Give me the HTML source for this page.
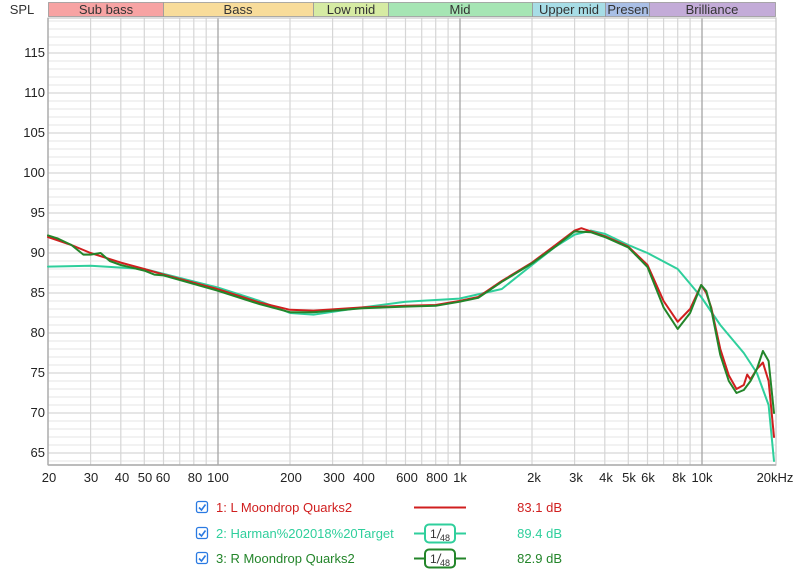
<!DOCTYPE html>
<html><head><meta charset="utf-8"><style>
html,body{margin:0;padding:0;background:#fff;width:800px;height:574px;overflow:hidden}
text{font-family:"Liberation Sans",Arial,sans-serif}
</style></head><body>
<svg width="800" height="574" viewBox="0 0 800 574" xmlns="http://www.w3.org/2000/svg">
<!-- bands -->
<g font-size="13" fill="#333" text-anchor="middle" stroke="#999" stroke-width="0.8">
<rect x="48.5" y="2.5" width="115" height="14" fill="#f7a3a3"/>
<rect x="163.5" y="2.5" width="150" height="14" fill="#f8dc9a"/>
<rect x="313.5" y="2.5" width="75" height="14" fill="#d6eba3"/>
<rect x="388.5" y="2.5" width="144" height="14" fill="#a6e5b4"/>
<rect x="532.5" y="2.5" width="73" height="14" fill="#a7dde6"/>
<rect x="605.5" y="2.5" width="44" height="14" fill="#a9bfe6"/>
<rect x="649.5" y="2.5" width="126" height="14" fill="#c3abd8"/>
</g>
<g font-size="13" fill="#333" text-anchor="middle">
<text x="106" y="14">Sub bass</text><text x="238" y="14">Bass</text><text x="351" y="14">Low mid</text>
<text x="460" y="14">Mid</text><text x="569" y="14">Upper mid</text><text x="628" y="14">Presen</text><text x="712" y="14">Brilliance</text>
<text x="22" y="14" text-anchor="middle">SPL</text>
</g>
<!-- grid -->
<g stroke="#e6e6e6" stroke-width="1">
<path d="M48 21H776M48 29H776M48 37H776M48 45H776M48 61H776M48 69H776M48 77H776M48 85H776M48 101H776M48 109H776M48 117H776M48 125H776M48 141H776M48 149H776M48 157H776M48 165H776M48 181H776M48 189H776M48 197H776M48 205H776M48 221H776M48 229H776M48 237H776M48 245H776M48 261H776M48 269H776M48 277H776M48 285H776M48 301H776M48 309H776M48 317H776M48 325H776M48 341H776M48 349H776M48 357H776M48 365H776M48 381H776M48 389H776M48 397H776M48 405H776M48 421H776M48 429H776M48 437H776M48 445H776M48 461H776"/>
</g>
<g stroke="#d6d6d6" stroke-width="1.2">
<path d="M48 53H776M48 93H776M48 133H776M48 173H776M48 213H776M48 253H776M48 293H776M48 333H776M48 373H776M48 413H776M48 453H776"/>
<path d="M90.6 18V465M120.8 18V465M144.3 18V465M163.5 18V465M179.7 18V465M193.8 18V465M206.2 18V465M290 18V465M332.6 18V465M362.8 18V465M386.3 18V465M405.5 18V465M421.7 18V465M435.7 18V465M448.1 18V465M532 18V465M574.6 18V465M604.8 18V465M628.3 18V465M647.5 18V465M663.6 18V465M677.7 18V465M690.1 18V465"/>
</g>
<g stroke="#aaa" stroke-width="1.4"><path d="M218 18V465M460 18V465M702 18V465"/></g>
<rect x="48" y="18" width="728" height="447" fill="none" stroke="#c8c8c8" stroke-width="1.2"/>
<path d="M48 465H776M48 18V465" stroke="#aaa" stroke-width="1.4" fill="none"/>
<!-- y labels -->
<g font-size="13" fill="#222" text-anchor="end">
<text x="45" y="57">115</text><text x="45" y="97">110</text><text x="45" y="137">105</text><text x="45" y="177">100</text>
<text x="45" y="217">95</text><text x="45" y="257">90</text><text x="45" y="297">85</text><text x="45" y="337">80</text>
<text x="45" y="377">75</text><text x="45" y="417">70</text><text x="45" y="457">65</text>
</g>
<g font-size="13" fill="#222" text-anchor="middle">
<text x="49" y="482">20</text><text x="91" y="482">30</text><text x="122" y="482">40</text><text x="145" y="482">50</text><text x="163" y="482">60</text>
<text x="195" y="482">80</text><text x="218" y="482">100</text><text x="291" y="482">200</text><text x="334" y="482">300</text><text x="364" y="482">400</text>
<text x="407" y="482">600</text><text x="437" y="482">800</text><text x="460" y="482">1k</text><text x="534" y="482">2k</text><text x="576" y="482">3k</text>
<text x="606" y="482">4k</text><text x="629" y="482">5k</text><text x="648" y="482">6k</text><text x="679" y="482">8k</text><text x="702" y="482">10k</text><text x="775" y="482">20kHz</text>
</g>
<!-- curves -->
<g fill="none" stroke-width="2" stroke-linejoin="round" stroke-linecap="round">
<polyline stroke="#2fcf9c" points="48,266.6 90.6,265.8 144.3,269 218,287.6 259.8,301 290,313 313.5,314.6 362.8,307.4 405.5,301.8 459.2,298.6 501.8,289 532,265 555.5,246.6 574.6,234.6 590.8,230.6 604.8,233.8 628.3,245 647.5,253 677.7,269 701.2,297 720.3,325 743.8,353 756.9,373 768.6,405 774,461"/>
<polyline stroke="#d01f1f" points="48,237 71.4,245 90.6,253 120.8,262.6 144.3,269 163.5,274.6 217.2,289 259.8,302.6 290,309.8 313.5,310.6 362.8,307.4 405.5,305.8 435.7,305 459.2,301 478.3,297 501.8,281 532,262.6 555.5,245 574.6,230.6 581.4,228.2 590.8,231.4 604.8,236.2 628.3,246.6 647.5,265 663.6,301 677.7,321.8 690.1,309 701.2,285 706.3,293 711.2,307.4 720.3,349 728.8,375.4 736.5,389 743.8,385 747.2,374.6 750.5,379.4 756.9,369 762.9,362.6 768.6,381 774,437"/>
<polyline stroke="#23852a" points="48,235.4 58,238.6 71.4,245 83.4,254.6 90.6,254.6 100.6,253 109.8,261 120.8,265 144.3,270.6 154.3,274.6 163.5,275.4 217.2,290.6 259.8,304.2 290,312.2 313.5,312.2 362.8,308.2 405.5,306.6 435.7,305.8 459.2,301.8 478.3,297.8 501.8,281.8 532,263.4 555.5,246.6 574.6,231.4 590.8,232.2 604.8,237 628.3,247.4 647.5,267 663.6,307.4 677.7,329 690.1,313 701.2,285 706.3,291 711.2,309 720.3,355 728.8,381 736.5,393 743.8,390 750.5,381 756.9,369 762.9,351 768.6,361 774,413"/>
</g>
<!-- legend -->
<g font-size="13">
<g stroke="#2a7ae2" stroke-width="1.3" fill="#fff">
<rect x="196.5" y="501.5" width="11" height="11" rx="2"/><rect x="196.5" y="527.5" width="11" height="11" rx="2"/><rect x="196.5" y="552.5" width="11" height="11" rx="2"/>
</g>
<g stroke="#2a7ae2" stroke-width="1.6" fill="none">
<path d="M199 507.5l2.5 2.5 4-5.5M199 533.5l2.5 2.5 4-5.5M199 558.5l2.5 2.5 4-5.5"/>
</g>
<text x="216" y="512" fill="#d01f1f">1: L Moondrop Quarks2</text>
<text x="216" y="538" fill="#2fcf9c">2: Harman%202018%20Target</text>
<text x="216" y="563" fill="#23852a">3: R Moondrop Quarks2</text>
<path d="M414 507.5H466" stroke="#d01f1f" stroke-width="2"/>
<path d="M414 533.5H425M455 533.5H466" stroke="#2fcf9c" stroke-width="2"/>
<rect x="425" y="524.5" width="30" height="18" rx="4" fill="#fff" stroke="#2fcf9c" stroke-width="2"/>
<path d="M414 558.5H425M455 558.5H466" stroke="#23852a" stroke-width="2"/>
<rect x="425" y="549.5" width="30" height="18" rx="4" fill="#fff" stroke="#23852a" stroke-width="2"/>
<g fill="#333"><text x="430" y="538" font-size="12">1</text><text x="440" y="541" font-size="9">48</text>
<text x="430" y="563" font-size="12">1</text><text x="440" y="566" font-size="9">48</text></g>
<path d="M437 538.5l4-10M437 563.5l4-10" stroke="#333" stroke-width="1"/>
<g text-anchor="end"><text x="562" y="512" fill="#d01f1f">83.1 dB</text><text x="562" y="538" fill="#2fcf9c">89.4 dB</text><text x="562" y="563" fill="#23852a">82.9 dB</text></g>
</g>
</svg>
</body></html>
